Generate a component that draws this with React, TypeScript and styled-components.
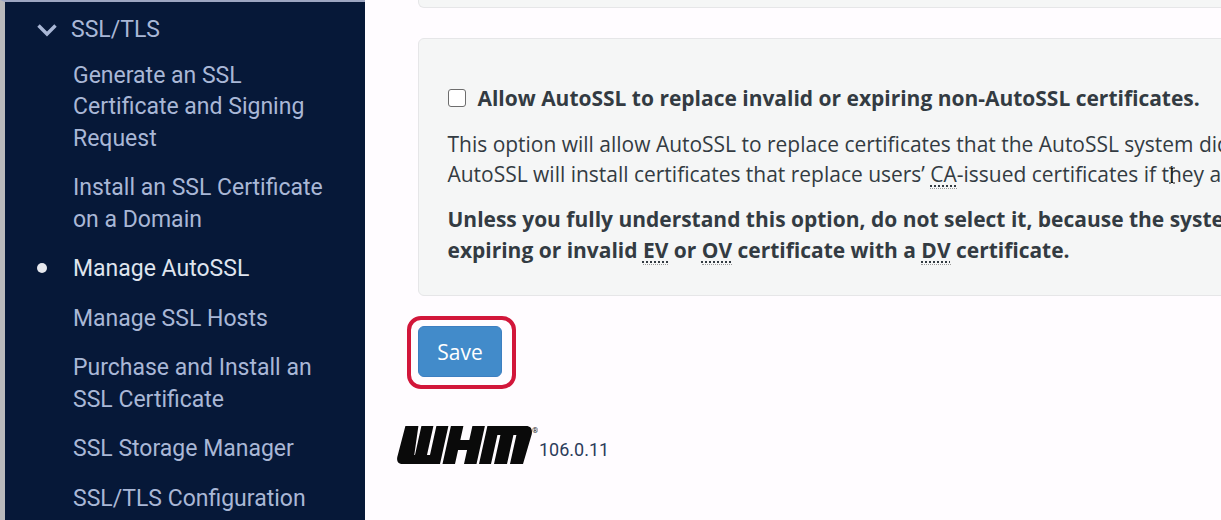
import React from "react"
import styled, { createGlobalStyle } from "styled-components"

const GlobalStyle = createGlobalStyle`
  html, body {
    margin: 0;
    padding: 0;
    height: 520px;
    overflow: hidden;
    background: #fffcff;
  }
`

const Page = styled.div`
  display: flex;
  width: 1221px;
  height: 520px;
  overflow: hidden;
  position: relative;
`

const Sidebar = styled.nav`
  width: 365px;
  height: 520px;
  flex: none;
  box-sizing: border-box;
  background: #061838;
  border-left: 5px solid #b9b9bb;
  border-top: 2px solid #9da6c2;
  padding: 10px 30px 0 32px;
  font-family: Roboto, sans-serif;
  font-size: 23px;
  line-height: 31.4px;
  color: #a9b7d6;
`

const SectionHead = styled.div`
  display: flex;
  align-items: center;
  gap: 14px;
  height: 36px;
  margin-bottom: 12px;
`

const Chevron = styled.svg`
  width: 20px;
  height: 14px;
  flex: none;
`

const MenuList = styled.ul`
  list-style: none;
  margin: 0;
  padding: 0 0 0 36px;
`

const MenuItem = styled.li<{ $active?: boolean }>`
  position: relative;
  margin-bottom: 18.1px;
  color: ${(p) => (p.$active ? "#dfe4ee" : "#a9b7d6")};
  ${(p) =>
    p.$active &&
    `&::before {
      content: "";
      position: absolute;
      left: -36px;
      top: 10px;
      width: 10px;
      height: 10px;
      border-radius: 50%;
      background: #e6e8ee;
    }`}
`

const Main = styled.main`
  flex: 1;
  min-width: 0;
  overflow: hidden;
  padding-left: 53px;
  font-family: "Open Sans", sans-serif;
  font-size: 20.98px;
  line-height: 30px;
  color: #333b42;
`

const PrevPanel = styled.div`
  height: 7px;
  width: 1000px;
  background: #f5f6f6;
  border: 1px solid #e6e6e8;
  border-top: none;
  border-radius: 0 0 6px 6px;
`

const Panel = styled.section`
  width: 1000px;
  height: 258px;
  box-sizing: border-box;
  margin-top: 30px;
  padding: 44px 28.5px 0;
  background: #f5f6f6;
  border: 1px solid #e6e6e8;
  border-radius: 6px;
`

const OptionLabel = styled.label`
  display: flex;
  align-items: center;
  gap: 12px;
  height: 30px;
  font-weight: 700;
  white-space: nowrap;
  margin-bottom: 16px;
`

const Check = styled.span`
  width: 16px;
  height: 16px;
  flex: none;
  background: #fff;
  border: 1px solid #6d6d6d;
  border-radius: 3px;
`

const Para = styled.p<{ $bold?: boolean }>`
  margin: 0 0 15px;
  white-space: nowrap;
  font-weight: ${(p) => (p.$bold ? 700 : 400)};
  line-height: ${(p) => (p.$bold ? 31 : 30)}px;
`

const Abbr = styled.span`
  text-decoration: underline dotted #333b42 2px;
  text-underline-offset: 3px;
  border-bottom: 1px dotted #999;
`

const SaveRing = styled.div`
  width: 109px;
  height: 73px;
  box-sizing: border-box;
  margin: 20px 0 0 -11px;
  padding: 6px 0 0 7px;
  border: 4px solid #d2163a;
  border-radius: 14px;
`

const SaveButton = styled.button`
  display: block;
  width: 84px;
  height: 51px;
  padding: 0;
  border: 1px solid #3d7fc1;
  border-radius: 6px;
  background: #428bca;
  color: #fff;
  font-family: "Open Sans", sans-serif;
  font-size: 20.98px;
`

const FooterRow = styled.div`
  display: flex;
  align-items: flex-end;
  margin: 37px 0 0 -21px;
`

const Logo = styled.svg`
  width: 141px;
  height: 38px;
  flex: none;
`

const Version = styled.span`
  font-family: Roboto, sans-serif;
  font-size: 18px;
  line-height: 24px;
  color: #2c3c5a;
  margin: 0 0 2px 1px;
`

const Cursor = styled.svg`
  position: absolute;
  left: 1167px;
  top: 167px;
  width: 10px;
  height: 17px;
`

const tlsItems = [
  "Generate an SSL Certificate and Signing Request",
  "Install an SSL Certificate on a Domain",
  "Manage AutoSSL",
  "Manage SSL Hosts",
  "Purchase and Install an SSL Certificate",
  "SSL Storage Manager",
  "SSL/TLS Configuration",
]

const SLANT = 8.4 / 38

// one slanted stem of the logo: b is the x where it would meet the baseline
function stem(b: number, w: number, y0 = 0, y1 = 38) {
  const x = (y: number) => b + SLANT * (38 - y)
  return `M${x(y0)} ${y0}H${x(y0) + w}L${x(y1) + w} ${y1}H${x(y1)}Z`
}

const logoPath = [
  // W
  "M8.4 0H21.4L16 38H6C1 38 -0.5 35 0.3 31Z",
  stem(16, 12),
  stem(31, 12),
  stem(4, 39, 29, 38),
  // H
  stem(45.5, 12.5),
  stem(67, 12.5),
  stem(50, 25, 14, 24),
  // M
  stem(82, 12),
  stem(97, 13),
  "M121.4 0H129C134 0 135.5 3 134.8 8L126 38H113Z",
  stem(82, 40, 0, 9),
].join(" ")

function App() {
  return (
    <Page>
      <GlobalStyle />
      <Sidebar>
        <SectionHead>
          <Chevron viewBox="0 0 20 14">
            <path d="M1.5 2.5l8.5 8.5 8.5-8.5" fill="none" stroke="#a9b7d6" strokeWidth="3.4" />
          </Chevron>
          SSL/TLS
        </SectionHead>
        <MenuList>
          {tlsItems.map((item) => (
            <MenuItem key={item} $active={item === "Manage AutoSSL"}>
              {item}
            </MenuItem>
          ))}
        </MenuList>
      </Sidebar>
      <Main>
        <PrevPanel />
        <Panel>
          <OptionLabel>
            <Check />
            Allow AutoSSL to replace invalid or expiring non-AutoSSL certificates.
          </OptionLabel>
          <Para>
            This option will allow AutoSSL to replace certificates that the AutoSSL system did not issue.
            <br />
            AutoSSL will install certificates that replace users’ <Abbr>CA</Abbr>-issued certificates if they are invalid
          </Para>
          <Para $bold>
            Unless you fully understand this option, do not select it, because the system could replace an
            <br />
            expiring or invalid <Abbr>EV</Abbr> or <Abbr>OV</Abbr> certificate with a <Abbr>DV</Abbr> certificate.
          </Para>
        </Panel>
        <SaveRing>
          <SaveButton>Save</SaveButton>
        </SaveRing>
        <FooterRow>
          <Logo viewBox="0 0 141 38">
            <path fill="#0a0a0a" d={logoPath} />
            <text x="135" y="7" fontSize="8" fontFamily="Roboto" fill="#222">®</text>
          </Logo>
          <Version>106.0.11</Version>
        </FooterRow>
      </Main>
      <Cursor viewBox="0 0 10 17">
        <path d="M2 1h2l1 1 1-1h2M5 2v13M2 16h2l1-1 1 1h2" fill="none" stroke="#111" strokeWidth="1" />
      </Cursor>
    </Page>
  )
}

export default App
